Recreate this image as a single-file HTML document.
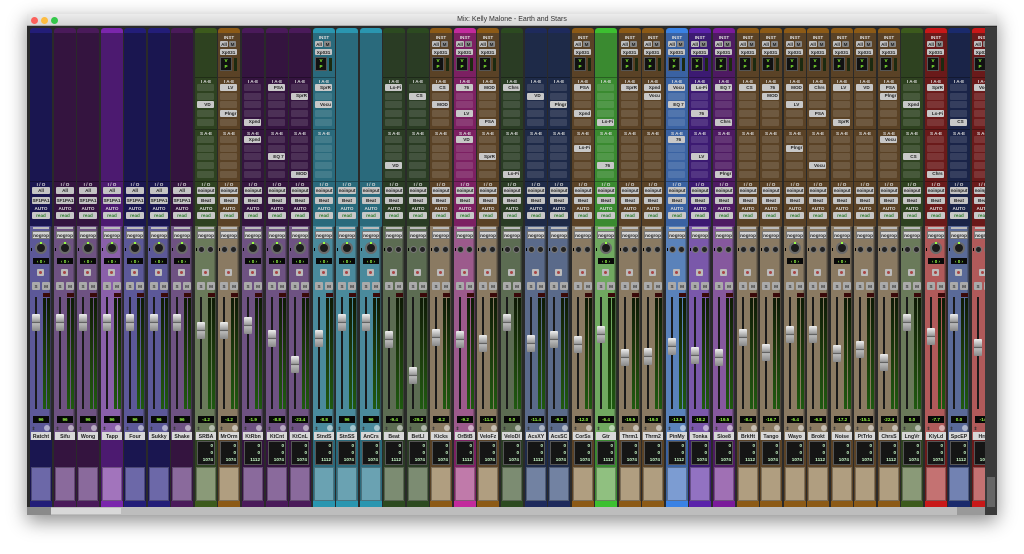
<!DOCTYPE html>
<html><head><meta charset="utf-8">
<style>
*{margin:0;padding:0;box-sizing:border-box}
body{width:1024px;height:554px;background:#fff;position:relative;overflow:hidden;font-family:"Liberation Sans",sans-serif}
#win{position:absolute;left:27px;top:14px;width:970px;height:501px;background:#2a2a2a;box-shadow:0 6px 18px rgba(0,0,0,.45);overflow:hidden}
#title{position:absolute;left:0;top:0;width:970px;height:12px;background:linear-gradient(#ececec,#d6d6d6);border-bottom:1px solid #aaa;font-size:7px;color:#333;text-align:center;line-height:12px}
.tl{position:absolute;top:3px;width:7px;height:7px;border-radius:50%}
#mix{position:absolute;left:3px;top:13px;width:955px;height:480px;overflow:hidden}
.a{position:absolute}
.t{position:absolute;font-size:4.6px;font-weight:bold;text-align:center;white-space:nowrap;overflow:hidden}
#hs{position:absolute;left:0;top:493px;width:960px;height:8px;background:#bdbdbd}
#vs{position:absolute;left:958px;top:13px;width:12px;height:488px;background:#3a3a3a}
</style></head><body>
<div id="win">
 <div id="title"><div class="tl" style="left:4px;background:#fc605b"></div><div class="tl" style="left:14px;background:#fdbc40"></div><div class="tl" style="left:24px;background:#34c84a"></div>Mix: Kelly Malone - Earth and Stars</div>
 <div id="mix"></div>
 <div id="hs"><div class="a" style="left:0;top:0;width:24px;height:8px;background:#8a8a8a"></div><div class="a" style="left:24px;top:1px;width:70px;height:6px;background:#d8d8d8"></div><div class="a" style="left:930px;top:0;width:30px;height:8px;background:#999"></div></div>
 <div id="vs"><div class="a" style="left:2px;top:450px;width:8px;height:30px;background:#666"></div></div>
</div>
<script>
var P={
navy:['#231d78','#1a1650','#5c5898','#6c68a8'],
dpurp:['#4a1a5a','#34143f','#6e5282','#8a6a9c'],
purp:['#7a26ac','#4c1a70','#8a60aa','#a274bc'],
olive:['#3c5a1c','#2e4220','#6a7a5a','#8a9a78'],
brown:['#8c5a16','#5a4226','#8a7a62','#b09e80'],
teal:['#2a96b0','#2a6a7c','#4a8a9c','#6aa2b2'],
dgreen:['#2c4a20','#2a3c24','#5c6c52','#7c8c72'],
mag:['#c22a9c','#7c2062','#9c5a8c','#c07aaa'],
slate:['#1e2a5c','#1e2a48','#5a6a8a','#7282a2'],
green:['#3cc030','#3a8a30','#70a860','#90c080'],
blue:['#3a82e4','#3a62a2','#5a82ba','#7c9cd2'],
vpurp:['#5a22aa','#3c1a72','#7a58aa','#9272c2'],
vpurp2:['#7a1a9a','#4e1a62','#86589e','#a070b4'],
red:['#c81818','#6a1a1a','#b05a5a','#c47272'],
navy2:['#1a2a6c','#1a2448','#5a6a98','#7282b2']};
var S=[
['Ratcht','navy','96',0,0,0],['Sifu','dpurp','96',0,0,0],['Wong','dpurp','96',0,0,0],['Tapp','purp','96',0,0,0],
['Four','navy','96',0,0,0],['Sukky','navy','96',0,0,0],['Shake','dpurp','96',0,0,0],
['SRBA','olive','-4.2',1,0,1],['MrOrm','brown','-4.2',1,1,1],['KtRbn','dpurp','-1.9',1,0,0],['KtCnt','dpurp','-8.8',1,0,0],['KtCnL','dpurp','-23.4',1,0,0],
['StndS','teal','-8.8',1,1,0],['StnSS','teal','96',0,0,0],['AnCrs','teal','96',0,0,0],
['Beat','dgreen','-9.4',1,0,1],['BetLl','dgreen','-29.2',1,0,1],['Kicks','brown','-8.2',1,1,1],['OrBtB','mag','-9.2',1,1,1],
['VeloFz','brown','-11.9',1,1,1],['VeloDl','dgreen','0.0',1,0,1],['AcsXY','slate','-11.4',1,0,1],['AcsSC','slate','-9.3',1,0,1],
['CorSs','brown','-12.0',1,1,1],['Gtr','green','-6.4',1,0,0],['Thrm1','brown','-19.5',1,1,1],['Thrm2','brown','-19.0',1,1,1],
['PinMy','blue','-13.5',1,1,1],['Tonka','vpurp','-18.2',1,1,1],['Sloe8','vpurp2','-19.5',1,1,1],['BrkHt','brown','-8.4',1,1,1],
['Tango','brown','-16.7',1,1,1],['Wayo','brown','-6.4',1,1,0],['Brokt','brown','-6.8',1,1,1],['Noise','brown','-17.2',1,1,0],
['PtTrlo','brown','-15.1',1,1,1],['ChrsS','brown','-22.4',1,1,1],['LngVr','olive','0.0',1,0,1],['KlyLd','red','-7.7',1,1,0],
['SpcEP','navy2','0.0',1,0,0],['Hrn','red','-14',1,1,1]];
var plug=['Xpnd','Vocu','Lo-Fi','EQ 7','CS','76','MOD','Chrs','LV','VD','PSA','Plngr','SprR'];
var h='',W=23.55;
function box(x,y,w,hh,bg,extra){return '<div class="a" style="left:'+x+'px;top:'+y+'px;width:'+w+'px;height:'+hh+'px;background:'+bg+';'+(extra||'')+'"></div>';}
function txt(x,y,w,s,c,extra){return '<div class="t" style="left:'+x+'px;top:'+y+'px;width:'+w+'px;color:'+c+';'+(extra||'')+'">'+s+'</div>';}
S.forEach(function(s,i){
 var x=Math.round(i*W),c=P[s[1]],w=22;
 h+=box(x,1,w,6,c[0],'border-radius:3px 3px 0 0');
 h+=box(x,6,w,148,c[1]);
 h+=box(x,154,w,46,c[1]);
 h+=box(x,199,w,218,'linear-gradient(90deg,'+c[2]+','+c[2]+' 85%,rgba(0,0,0,.25))');
 h+=box(x+1,221,1,3,'#000');
 var inst=s[4];
 if(inst){
  h+=txt(x,8,w,'INST','#ddd');
  h+=box(x+2,14,8,6,'#bdbdbd','border-radius:1px');h+=txt(x+2,14.5,8,'All','#222');
  h+=box(x+11,14,7,6,'#888','border-radius:1px');h+=txt(x+11,14.5,7,'M','#222');
  h+=box(x+2,22,17,6,'#c4c4c4','border-radius:1px');h+=txt(x+2,22.5,17,'Xp031','#222');
  h+=box(x+2,30,12,14,'#111','border:1px solid #555');h+=txt(x+2,31,12,'V','#8f3');h+=txt(x+2,37,12,'P','#8f3');
  h+=box(x+16,31,3,13,'#1c2a10');
 }
 if(s[3]){
  h+=box(x,50,w,1,'rgba(0,0,0,.3)');h+=box(x,102,w,1,'rgba(0,0,0,.3)');
  h+=txt(x,51.5,w,'I A-E','#ddd');h+=txt(x,103.5,w,'S A-E','#ddd');
  for(var k=0;k<5;k++){
   var on=((i*7+k*3)%5==0)||(k==0&&inst);
   h+=box(x+2,57+k*8.7,17,7,on?'#c8c8c8':'rgba(255,255,255,.12)','border-radius:1px');
   if(on)h+=txt(x+6,57.6+k*8.7,13,plug[(i+k)%plug.length],'#222');
   var on2=((i*5+k*2)%9==0);
   h+=box(x+2,109+k*8.7,17,7,on2?'#c8c8c8':'rgba(255,255,255,.12)','border-radius:1px');
   if(on2)h+=txt(x+6,109.6+k*8.7,13,plug[(i+k+4)%plug.length],'#222');
  }
 }
 h+=box(x,154,w,1,'rgba(0,0,0,.3)');
 h+=txt(x,155,w,'I / O','#ddd');
 h+=box(x+2,160,18,7,'#c4c4c4','border-radius:1px');h+=txt(x+2,161,18,i<7?'All':'noinput','#222');
 h+=box(x+2,170,18,7,'#c4c4c4','border-radius:1px');h+=txt(x+2,171,18,i<7?'SF1PA1':'Beat','#222');
 h+=txt(x,179,w,'AUTO','#ddd');
 h+=box(x+2,185,18,7,'#c8c8c8','border-radius:1px');h+=txt(x+2,186,18,'read','#2a7a2a');
 h+=box(x+3,200,16,2,'#bbb');
 h+=box(x+2,204,18,8,'#d2d2d2','border-radius:1px;border:1px solid #777');h+=txt(x+2,205.5,18,'nogrop','#222');
 var stereo=s[5];
 if(stereo){h+=box(x+3,219,7,7,'#222','border-radius:50%;border:1px solid #777');h+=box(x+12,219,7,7,'#222','border-radius:50%;border:1px solid #777');}
 else{h+=box(x+5,215,12,12,'#1c1c1c','border-radius:50%;border:2px solid #6a6a6a');h+=box(x+10,215,2,2,'#9f4');
  h+=box(x+3,231,16,6,'#080808');h+=txt(x+3,231.5,16,'&lsaquo; 0 &rsaquo;','#9f4');}
 h+=box(x+7,242,7,7,'#bbb','border-radius:1px');h+=box(x+9,244,3,3,'#a44','border-radius:50%');
 h+=box(x+2,255,8,8,'#aaa','border-radius:1px');h+=txt(x+2,256.5,8,'S','#333');
 h+=box(x+12,255,8,8,'#aaa','border-radius:1px');h+=txt(x+12,256.5,8,'M','#333');
 // fader + meter
 h+=box(x+5,270,2,112,'#1a1a1a');
 h+=box(x+13,266,7,4,'#3a0a0a');
 h+=box(x+13,271,3,111,'linear-gradient(#0e1a06,#1c3a0c 50%,#1f5a10)');
 h+=box(x+17,271,3,111,'linear-gradient(#0e1a06,#1c3a0c 50%,#1f5a10)');
 var db=parseFloat(s[2]);if(isNaN(db)||db>0)db=0;
 var fy=Math.round(295+1.8*Math.abs(db));
 h+=box(x+2,fy-8,8,17,'linear-gradient(#f0f0f0,#9a9a9a 45%,#444 50%,#bbb 55%,#888)','border-radius:1px');
 h+=box(x+3,389,16,7,'#080808');h+=txt(x+3,390,16,s[2],'#9f4');
 h+=txt(x+1,399,5,'&#8661;','#333');
 h+=box(x+14,398,6,6,'rgba(255,255,255,.5)','border-radius:50%');
 h+=box(x+1,405,20,8,'#d8d8d8');h+=txt(x+1,406.5,20,s[0],'#222','font-size:5.2px');
 h+=box(x,413,w,70,c[1]);
 if(i>=7){h+=box(x+2,414,18,24,'#151515','border:1px solid #555');
  h+=txt(x+2,416,16,'0','#cfc','text-align:right');h+=txt(x+2,423,16,'0','#cfc','text-align:right');h+=txt(x+2,430,16,i%3?'1074':'1112','#cfc','text-align:right');}
 h+=box(x+1,440,20,34,c[3],'border:1px solid rgba(0,0,0,.3)');
 h+=box(x,474,w,6,c[0]);
});
document.getElementById('mix').innerHTML=h;
</script>
</body></html>
